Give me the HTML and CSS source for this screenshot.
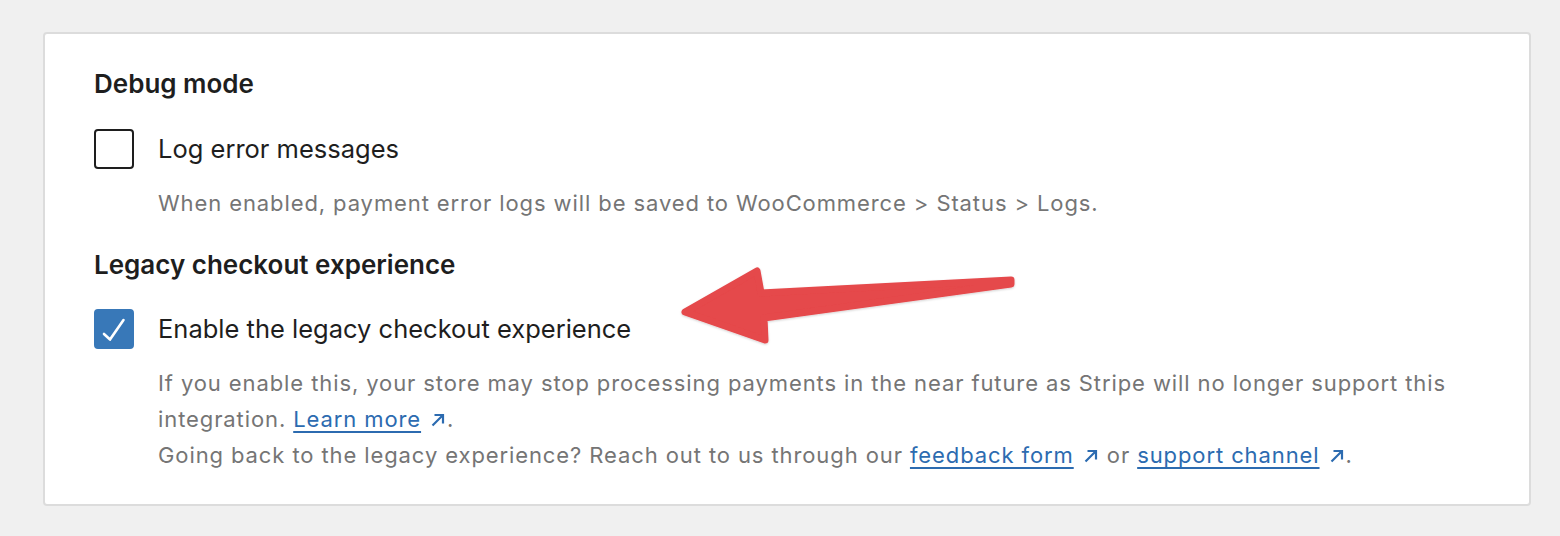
FILE: index.html
```html
<!DOCTYPE html>
<html lang="en">
<head>
<meta charset="utf-8">
<title>Settings</title>
<link rel="stylesheet" href="styles.css">
</head>
<body>
<div class="page">
  <section class="card">
    <h2 class="heading">Debug mode</h2>
    <label class="option">
      <span class="box"></span>
      <span class="label">Log error messages</span>
    </label>
    <p class="desc">When enabled, payment error logs will be saved to WooCommerce &gt; Status &gt; Logs.</p>

    <h2 class="heading heading-2">Legacy checkout experience</h2>
    <label class="option option-2">
      <span class="box checked">
        <svg viewBox="0 0 40 40" width="40" height="40"><path d="M10 25 L16 30.5 L29.5 11" fill="none" stroke="#fff" stroke-width="2.6" stroke-linecap="round" stroke-linejoin="round"/></svg>
      </span>
      <span class="label">Enable the legacy checkout experience</span>
    </label>
    <p class="desc desc-multi">If you enable this, your store may stop processing payments in the near future as Stripe will no longer support this integration. <a href="#" class="link">Learn more</a><span class="ext"><svg viewBox="0 0 14 14" width="14" height="14"><path d="M1.5 12.5 L12 2 M3.5 2 H12 V10.5" fill="none" stroke="currentColor" stroke-width="2.2"/></svg></span>.<br>Going back to the legacy experience? Reach out to us through our <a href="#" class="link">feedback form</a><span class="ext"><svg viewBox="0 0 14 14" width="14" height="14"><path d="M1.5 12.5 L12 2 M3.5 2 H12 V10.5" fill="none" stroke="currentColor" stroke-width="2.2"/></svg></span> or <a href="#" class="link">support channel</a><span class="ext"><svg viewBox="0 0 14 14" width="14" height="14"><path d="M1.5 12.5 L12 2 M3.5 2 H12 V10.5" fill="none" stroke="currentColor" stroke-width="2.2"/></svg></span>.</p>

    <svg class="arrow" viewBox="0 0 360 100" width="360" height="100">
      <defs>
        <filter id="sh" x="-10%" y="-20%" width="120%" height="150%">
          <feDropShadow dx="0" dy="1" stdDeviation="1.2" flood-color="#000" flood-opacity="0.18"/>
        </filter>
      </defs>
      <polygon points="15,57 87,16 91,38 341,25 341,29 94,63 95,85" fill="#e5484b" stroke="#e5484b" stroke-width="7" stroke-linejoin="round" filter="url(#sh)"/>
    </svg>
  </section>
</div>
</body>
</html>
```

FILE: styles.css
```css
* { box-sizing: border-box; }
html, body { margin: 0; padding: 0; }
body {
  background: #f0f0f0;
  font-family: Inter, "Noto Sans", "Liberation Sans", sans-serif;
  color: #1e1e1e;
  width: 1560px;
  height: 536px;
  overflow: hidden;
}
.page {
  padding: 32px 29px 0 43px;
}
.card {
  position: relative;
  background: #fff;
  border: 2px solid #dcdcdc;
  border-radius: 4px;
  height: 474px;
  padding: 32px 48px 0 49px;
}
.heading {
  margin: 0;
  font-size: 26px;
  font-weight: 600;
  line-height: 36px;
  color: #1e1e1e;
}
.heading-2 { margin-top: 26px; }
.option {
  display: flex;
  align-items: center;
  gap: 24px;
  margin-top: 27px;
}
.option-2 { margin-top: 26px; }
.box {
  width: 40px;
  height: 40px;
  border: 2px solid #1e1e1e;
  border-radius: 4px;
  flex: none;
  display: flex;
}
.box.checked {
  background: #3878b8;
  border-color: #3878b8;
}
.box.checked svg { margin: -2px; }
.label {
  font-size: 25.5px;
  line-height: 36px;
  color: #1e1e1e;
}
.desc {
  margin: 16px 0 0 64px;
  font-size: 22px;
  letter-spacing: 0.9px;
  line-height: 36px;
  color: #757575;
}
.desc-multi { margin-top: 16px; }
.link {
  color: #2c6bb0;
  text-decoration: underline;
  text-underline-offset: 4px;
  text-decoration-thickness: 2px;
}
.ext {
  display: inline-block;
  color: #2c6bb0;
  margin: 0 2px 0 10px;
  vertical-align: 0px;
}
.ext svg { display: block; }
.arrow {
  position: absolute;
  left: 625px;
  top: 221px;
}
```
